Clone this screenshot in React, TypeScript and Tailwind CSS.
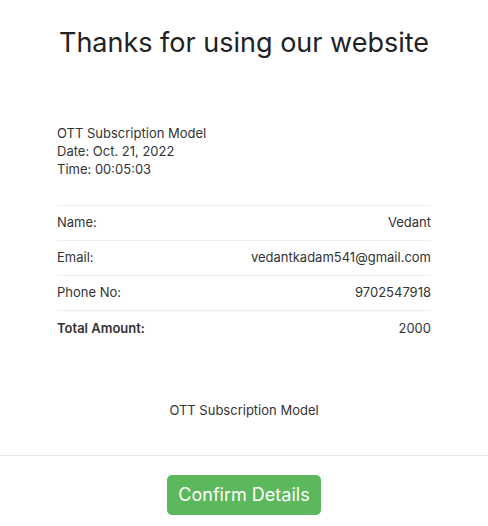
const ROWS = [
  { label: "Name:", value: "Vedant" },
  { label: "Email:", value: "vedantkadam541@gmail.com" },
  { label: "Phone No:", value: "9702547918" },
];

export default function App() {
  return (
    <div className="flex h-[526px] w-full flex-col overflow-hidden bg-white text-[#333] [font-family:Inter,'Noto_Sans',sans-serif]">
      <div className="px-[57px]">
        <h1 className="whitespace-nowrap pt-[23px] text-center text-[27px] leading-[40px] font-normal text-[#222]">
          Thanks for using our website
        </h1>

        <div className="mt-[61px] text-[13px] leading-[18px]">
          <p>OTT Subscription Model</p>
          <p>Date: Oct. 21, 2022</p>
          <p>Time: 00:05:03</p>
        </div>

        <table className="mt-[27px] w-full text-[13px]">
          <tbody>
            {ROWS.map((row) => (
              <tr key={row.label} className="h-[35px] border-t border-[#eceeef]">
                <td className="text-left">{row.label}</td>
                <td className="text-right">{row.value}</td>
              </tr>
            ))}
            <tr className="h-[35px] border-t border-[#eceeef]">
              <td className="text-left font-semibold">Total Amount:</td>
              <td className="text-right">2000</td>
            </tr>
          </tbody>
        </table>

        <p className="mt-[55px] text-center text-[13px] leading-[18px]">OTT Subscription Model</p>
      </div>

      <div className="mt-[36px] flex justify-center border-t border-[#e5e5e5] pt-[19px]">
        <button className="h-[40px] w-[154px] rounded-[5px] bg-[#5cb85c] text-[18px] text-white">
          Confirm Details
        </button>
      </div>
    </div>
  );
}
